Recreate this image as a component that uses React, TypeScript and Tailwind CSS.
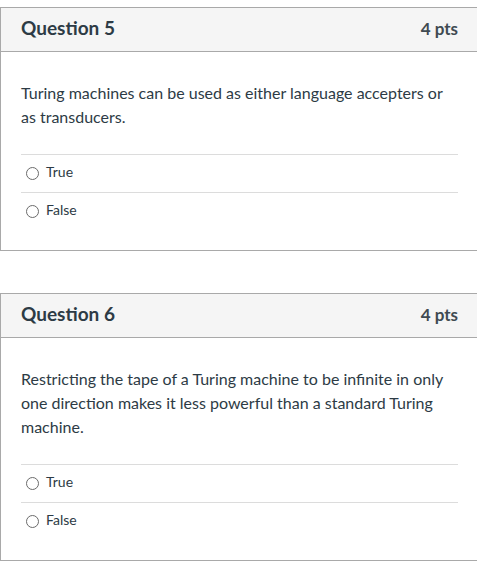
import { useState } from 'react';

type Question = {
  id: number;
  points: number;
  text: string;
};

const questions: Question[] = [
  {
    id: 5,
    points: 4,
    text: 'Turing machines can be used as either language accepters or as transducers.',
  },
  {
    id: 6,
    points: 4,
    text: 'Restricting the tape of a Turing machine to be infinite in only one direction makes it less powerful than a standard Turing machine.',
  },
];

function QuestionCard({ q }: { q: Question }) {
  const [answer, setAnswer] = useState<string | null>(null);

  return (
    <div className="border-l border-t border-b border-[#a9a9a9] bg-white">
      {/* Header */}
      <div className="flex items-center justify-between h-[44px] pb-[2px] pl-[20px] pr-[19px] bg-[#f5f5f5] border-b border-[#a9a9a9]">
        <h2 className="text-[19px] font-bold text-[#2d3b45]">Question {q.id}</h2>
        <span className="text-[17px] font-bold text-[#3f4a52]">{q.points} pts</span>
      </div>

      {/* Body */}
      <div className="pt-[29px] pb-[20px] pl-[20px] pr-[19px]">
        <p className="text-[16px] leading-[24px] text-[#2d3b45] pr-[10px]">{q.text}</p>
        <div className="mt-[25px]">
          {['True', 'False'].map(opt => (
            <label
              key={opt}
              className="flex items-center h-[38px] pb-[5px] border-t border-[#dcdcdc] pl-[5px] cursor-pointer"
            >
              <input
                type="radio"
                name={`q${q.id}`}
                checked={answer === opt}
                onChange={() => setAnswer(opt)}
                className="sr-only"
              />
              <span className="w-[13px] h-[13px] rounded-full border border-[#6b6b6b] bg-white mr-[7px] mt-[4px]"></span>
              <span className="text-[14px] text-[#2d3b45]">{opt}</span>
            </label>
          ))}
        </div>
      </div>
    </div>
  );
}

export default function App() {
  return (
    <div className="bg-white min-h-screen pt-[7px] font-['Lato',sans-serif]">
      <div className="flex flex-col gap-[42px]">
        {questions.map(q => (
          <QuestionCard key={q.id} q={q} />
        ))}
      </div>
    </div>
  );
}
